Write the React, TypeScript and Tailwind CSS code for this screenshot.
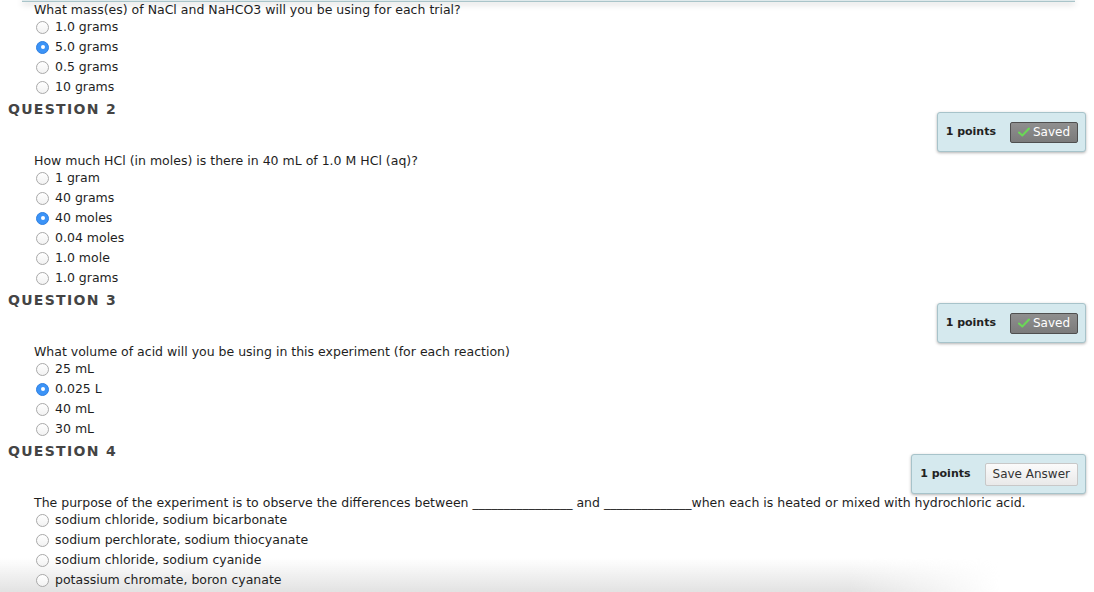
import React from "react";

type Question = {
  num?: number;
  text: React.ReactNode;
  options: string[];
  selected?: number;
  saved: boolean;
};

const questions: Question[] = [
  {
    text: "What mass(es) of NaCl and NaHCO3 will you be using for each trial?",
    options: ["1.0 grams", "5.0 grams", "0.5 grams", "10 grams"],
    selected: 1,
    saved: true,
  },
  {
    num: 2,
    text: "How much HCl (in moles) is there in 40 mL of 1.0 M HCl (aq)?",
    options: ["1 gram", "40 grams", "40 moles", "0.04 moles", "1.0 mole", "1.0 grams"],
    selected: 2,
    saved: true,
  },
  {
    num: 3,
    text: "What volume of acid will you be using in this experiment (for each reaction)",
    options: ["25 mL", "0.025 L", "40 mL", "30 mL"],
    selected: 1,
    saved: true,
  },
  {
    num: 4,
    text: (
      <>
        The purpose of the experiment is to observe the differences between ________________ and
        ______________when each is heated or mixed with hydrochloric acid.
      </>
    ),
    options: [
      "sodium chloride, sodium bicarbonate",
      "sodium perchlorate, sodium thiocyanate",
      "sodium chloride, sodium cyanide",
      "potassium chromate, boron cyanate",
    ],
    saved: false,
  },
];

const Radio: React.FC<{ checked: boolean }> = ({ checked }) =>
  checked ? (
    <span className="w-[13px] h-[13px] rounded-full bg-[#3b93f7] border border-[#2f7fe0] flex items-center justify-center shrink-0">
      <span className="w-[4px] h-[4px] rounded-full bg-white" />
    </span>
  ) : (
    <span className="w-[13px] h-[13px] rounded-full bg-gradient-to-b from-white to-[#f2f2f2] border border-[#a9a9a9] shrink-0" />
  );

const PointsBox: React.FC<{ saved: boolean }> = ({ saved }) => (
  <div className="mt-[13px] h-[40px] mr-[8px] flex items-center gap-[14px] pl-[8px] pr-[7px] bg-[#d5e9ee] border border-[#a7c3ca] rounded-[3px] shadow-[0_1px_3px_rgba(0,0,0,0.3)]">
    <span className="text-[11px] font-bold text-[#222]">1 points</span>
    {saved ? (
      <span className="h-[21px] w-[68px] flex items-center justify-center gap-[3px] rounded-[2px] border border-[#4f4f4f] bg-gradient-to-b from-[#8f8f8f] to-[#7b7b7b] text-white text-[12px]">
        <svg width="12" height="10" viewBox="0 0 12 10">
          <path d="M1 5.5 L4.3 8.5 L11 1.5" stroke="#6ad856" strokeWidth="2" fill="none" strokeLinecap="round" strokeLinejoin="round" />
        </svg>
        Saved
      </span>
    ) : (
      <span className="h-[23px] px-[7px] flex items-center rounded-[2px] border border-[#c8c8c8] bg-gradient-to-b from-[#fbfbfb] to-[#e9e9e9] text-[#333] text-[12px]">
        Save Answer
      </span>
    )}
  </div>
);

export default function App() {
  return (
    <div
      className="relative w-[1094px] h-[592px] overflow-hidden bg-white text-[#1e1e1e]"
      style={{ fontFamily: '"DejaVu Sans", "Liberation Sans", sans-serif' }}
    >
      {/* bottom bar shadow, behind the content */}
      <div className="absolute bottom-0 left-0 w-[1000px] h-[34px] bg-gradient-to-b from-white/0 to-[#e2e2e2] [mask-image:linear-gradient(to_right,black_85%,transparent)]" />

      {/* sticky header edge at top */}
      <div className="absolute top-0 left-[22px] w-[1053px] h-[2px] bg-[#dfe9eb] border-b border-[#a9c4c9] shadow-[0_2px_6px_rgba(0,0,0,0.25)] z-20" />

      <div className="relative z-10 pt-[3px]">
        {questions.map((q, i) => (
          <div key={i}>
            {q.num && (
              <div className="mt-[2px] flex justify-between items-start">
                <span className="pl-[8px] leading-[20px] text-[14px] font-bold tracking-[1.3px] text-[#444]">
                  QUESTION {q.num}
                </span>
                <PointsBox saved={q.saved} />
              </div>
            )}
            <div className={`${q.num ? "mt-[2px]" : ""} pl-[34px] h-[14px] leading-[14px] text-[12.5px] whitespace-nowrap`}>
              {q.text}
            </div>
            {q.options.map((o, j) => (
              <div key={o} className="h-[20px] flex items-center pl-[36px] gap-[6px] text-[12.5px]">
                <Radio checked={q.selected === j} />
                <span>{o}</span>
              </div>
            ))}
          </div>
        ))}
      </div>
    </div>
  );
}
